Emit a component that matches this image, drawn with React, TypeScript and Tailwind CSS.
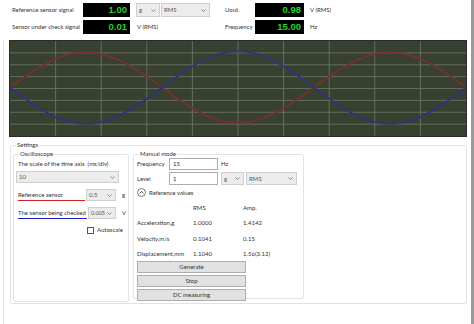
import React from "react";

const Chevron = () => (
  <svg width="5" height="3" viewBox="0 0 5 3" className="shrink-0">
    <path d="M0.5 0.5 L2.5 2.5 L4.5 0.5" fill="none" stroke="#707070" strokeWidth="0.8" />
  </svg>
);

const Drop = ({ text, w, h = 14, cls = "" }: { text: string; w: string; h?: number; cls?: string }) => (
  <div
    className={`${w} ${cls} flex items-center justify-between border border-[#cfcfcf] bg-[#ececec] pl-[2px] pr-[3px] text-[#555]`}
    style={{ height: h }}
  >
    <span>{text}</span>
    <Chevron />
  </div>
);

const LcdBox = ({ value, w }: { value: string; w: string }) => (
  <div
    className={`${w} h-[14px] bg-black flex items-center justify-end pr-[3px] text-[#22d422] font-bold text-[9.5px]`}
    style={{ fontFamily: '"Liberation Sans", Arial, sans-serif' }}
  >
    {value}
  </div>
);

function Chart() {
  const W = 458;
  const H = 97;
  const vx = Array.from({ length: 9 }, (_, i) => ((i + 1) * W) / 10);
  const hy = Array.from({ length: 7 }, (_, i) => ((i + 1) * H) / 8);
  const pts = (amp: number, sign: number) => {
    const arr: string[] = [];
    for (let x = 0; x <= W; x += 2) {
      const y = H / 2 - 1 - sign * amp * Math.sin((3 * Math.PI * x) / W);
      arr.push(`${x},${y.toFixed(2)}`);
    }
    return arr.join(" ");
  };
  return (
    <div className="w-[458px] h-[97px] bg-[#38412f] border border-[#2a2a2a]">
      <svg width="456" height="95" viewBox={`0 0 ${W} ${H}`} preserveAspectRatio="none">
        {vx.map((x) => (
          <line key={"v" + x} x1={x} y1={0} x2={x} y2={H} stroke="#6f7a69" strokeWidth="0.8" />
        ))}
        {hy.map((y) => (
          <line key={"h" + y} x1={0} y1={y} x2={W} y2={y} stroke="#6f7a69" strokeWidth="0.8" />
        ))}
        <polyline points={pts(36, 1)} fill="none" stroke="#77302c" strokeWidth="1.8" />
        <polyline points={pts(37, -1)} fill="none" stroke="#2c3382" strokeWidth="1.8" />
      </svg>
    </div>
  );
}

export default function App() {
  return (
    <div
      className="w-[474px] h-[324px] bg-white flex overflow-hidden text-[6px] leading-[8px] text-[#333]"
      style={{ fontFamily: 'Lato, "Noto Sans", sans-serif' }}
    >
      <div className="w-[471px] flex flex-col">
        {/* top readouts */}
        <div className="pt-[3px] pl-[12px] flex flex-col gap-[3px]">
          <div className="flex items-center h-[14px]">
            <div className="w-[71px]">Reference sensor signal</div>
            <LcdBox value="1.00" w="w-[47px]" />
            <Drop text="g" w="w-[24px]" cls="ml-[6px]" />
            <Drop text="RMS" w="w-[49px]" cls="ml-[1px]" />
            <div className="w-[30px] ml-[15px]">Uout.</div>
            <LcdBox value="0.98" w="w-[49px]" />
            <div className="ml-[6px]">V (RMS)</div>
          </div>
          <div className="flex items-center h-[14px]">
            <div className="w-[71px]">Sensor under check signal</div>
            <LcdBox value="0.01" w="w-[47px]" />
            <div className="w-[88px] ml-[7px]">V (RMS)</div>
            <div className="w-[30px]">Frequency</div>
            <LcdBox value="15.00" w="w-[49px]" />
            <div className="ml-[6px]">Hz</div>
          </div>
        </div>

        {/* lower area */}
        <div className="flex-1 mt-[6px] ml-[3px] border-l border-[#e2e2e2] pl-[5px] flex flex-col">
          <Chart />

          <fieldset className="ml-[1px] mt-[4px] w-[457px] border border-[#dde3e7] rounded-[2px] px-[2px] pb-[1px]">
            <legend className="ml-[3px] px-[1px] leading-[8px]">Settings</legend>
            <div className="flex gap-[4px] pt-[1px]">
              {/* Oscilloscope */}
              <fieldset className="w-[115px] h-[152px] border border-[#dde3e7] rounded-[2px] pl-[2px] pr-[2px]">
                <legend className="ml-[3px] px-[1px] leading-[8px]">Oscilloscope</legend>
                <div className="pl-[2px] mt-[2px] h-[8px]">The scale of the time axis&nbsp; (ms/div)</div>
                <Drop text="10" w="w-[103px]" h={12} cls="mt-[3px] ml-[0px]" />
                <div className="flex items-center mt-[6px] h-[12px]">
                  <div className="w-[70px] pl-[2px] relative h-[12px] flex items-center">
                    <span>Reference sensor</span>
                    <div className="absolute left-[2px] right-[1px] bottom-[0px] h-[1.5px] bg-[#d31f1f]" />
                  </div>
                  <Drop text="0.5" w="w-[30px]" h={12} />
                  <div className="ml-[6px]">g</div>
                </div>
                <div className="flex items-center mt-[6px] h-[12px]">
                  <div className="w-[72px] pl-[2px] relative h-[12px] flex items-center">
                    <span>The sensor being checked</span>
                    <div className="absolute left-[2px] right-[1px] bottom-[0px] h-[1.5px] bg-[#1c1cc8]" />
                  </div>
                  <Drop text="0.005" w="w-[28px]" h={12} cls="text-[5.5px]" />
                  <div className="ml-[6px]">V</div>
                </div>
                <div className="flex items-center mt-[7px] ml-[71px] gap-[3px]">
                  <div className="w-[7px] h-[7px] border border-[#555] bg-white" />
                  <span>Autoscale</span>
                </div>
              </fieldset>

              {/* Manual mode */}
              <fieldset className="w-[168px] h-[149px] border border-[#dde3e7] rounded-[2px] pl-[3px]">
                <legend className="ml-[2px] px-[1px] leading-[8px]">Manual mode</legend>
                <div className="flex items-center mt-[0px] h-[12px]">
                  <div className="w-[32px]">Frequency</div>
                  <div className="w-[49px] h-[12px] border border-[#abadb3] bg-white pl-[3px] flex items-center">15</div>
                  <div className="ml-[3px]">Hz</div>
                </div>
                <div className="flex items-center mt-[2px] h-[13px]">
                  <div className="w-[32px]">Level</div>
                  <div className="w-[49px] h-[13px] border border-[#abadb3] bg-white pl-[3px] flex items-center">1</div>
                  <Drop text="g" w="w-[23px]" h={13} cls="ml-[3px]" />
                  <Drop text="RMS" w="w-[51px]" h={13} cls="ml-[2px]" />
                </div>
                <div className="flex items-center mt-[3px] gap-[3px] h-[9px]">
                  <svg width="9" height="9" viewBox="0 0 9 9">
                    <circle cx="4.5" cy="4.5" r="4" fill="white" stroke="#444" strokeWidth="0.7" />
                    <path d="M2.6 5.4 L4.5 3.4 L6.4 5.4" fill="none" stroke="#333" strokeWidth="0.9" />
                  </svg>
                  <span>Reference values</span>
                </div>
                <div className="grid grid-cols-[56px_50px_60px] mt-[3px]">
                  <div className="h-[15px]"></div>
                  <div className="h-[15px] flex items-center">RMS</div>
                  <div className="h-[15px] flex items-center">Amp.</div>
                  <div className="h-[16px] flex items-center">Acceleration,g</div>
                  <div className="h-[16px] flex items-center">1.0000</div>
                  <div className="h-[16px] flex items-center">1.4142</div>
                  <div className="h-[15px] flex items-center">Velocity,m/s</div>
                  <div className="h-[15px] flex items-center">0.1041</div>
                  <div className="h-[15px] flex items-center">0.15</div>
                  <div className="h-[15px] flex items-center">Displacement,mm</div>
                  <div className="h-[15px] flex items-center">1.1040</div>
                  <div className="h-[15px] flex items-center">1.56(3.12)</div>
                </div>
                <div className="flex flex-col gap-[2px] mt-[0px] w-[109px]">
                  {["Generate", "Stop", "DC measuring"].map((t) => (
                    <div
                      key={t}
                      className="h-[12px] border border-[#adadad] bg-[#e1e1e1] flex items-center justify-center"
                    >
                      {t}
                    </div>
                  ))}
                </div>
              </fieldset>
            </div>
          </fieldset>
        </div>
      </div>
      <div className="w-[3px] h-full bg-[#9a9a9a]" />
    </div>
  );
}
